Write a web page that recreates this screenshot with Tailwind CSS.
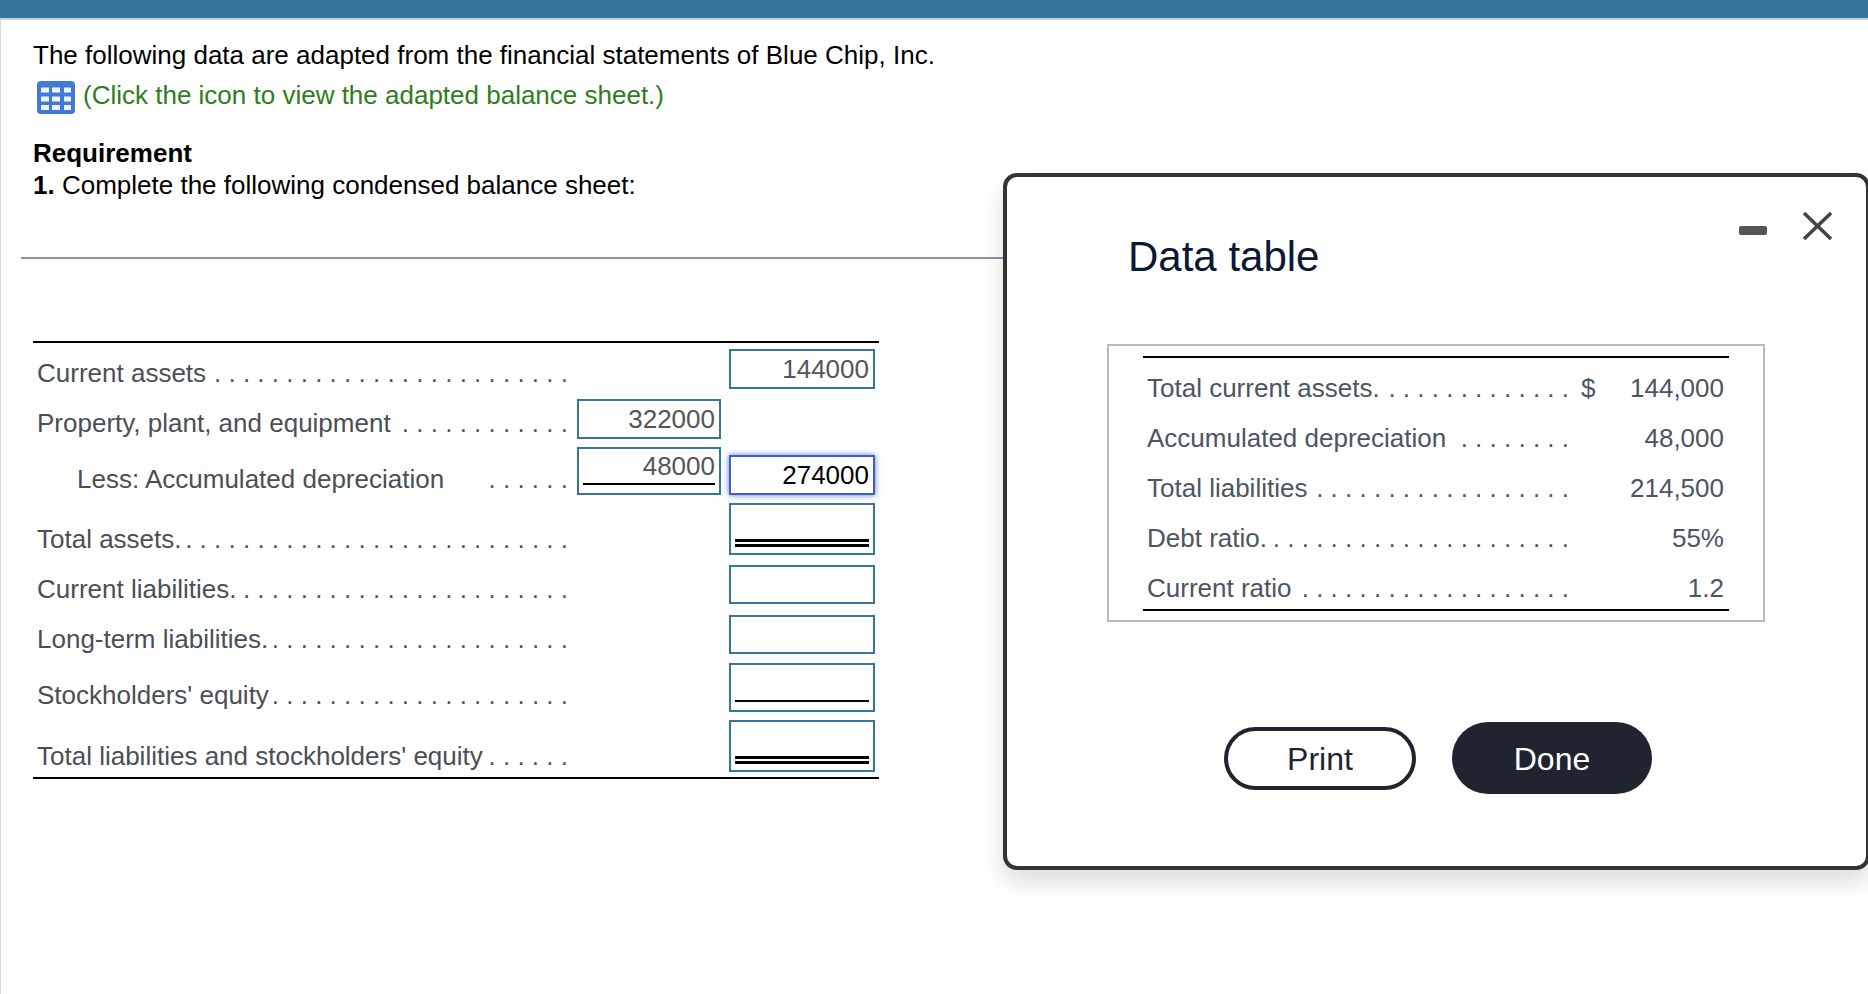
<!DOCTYPE html>
<html lang="en">
<head>
  <meta charset="UTF-8" />
  <title>Data table</title>
  <script src="https://cdn.jsdelivr.net/npm/@tailwindcss/browser@4"></script>
</head>
<body class="relative h-[994px] overflow-hidden bg-white font-['Liberation_Sans',Arial,sans-serif] text-[26px] text-black">
  <div class="h-[20px] bg-[#36769a] border-b-2 border-[#c9d0de]"></div>
  <div class="absolute left-0 top-[20px] bottom-0 w-px bg-[#d5d8ea]"></div>

  <div class="pt-[15px] pl-[33px]">
    <p class="leading-[40px]">The following data are adapted from the financial statements of Blue Chip, Inc.</p>
    <p class="flex items-center h-[40px] text-[#2e7d21]">
      <svg class="ml-[4px] mr-[8px] mt-[5px] blur-[0.5px]" width="38" height="33" viewBox="0 0 38 33">
        <rect width="38" height="33" rx="4" fill="#4379d6" />
        <g fill="#eef3fd">
          <rect x="4" y="6.5" width="8" height="5" /><rect x="15" y="6.5" width="8" height="5" /><rect x="27" y="6.5" width="7" height="5" />
          <rect x="4" y="15.5" width="8" height="5" /><rect x="15" y="15.5" width="8" height="5" /><rect x="27" y="15.5" width="7" height="5" />
          <rect x="4" y="24" width="8" height="5" /><rect x="15" y="24" width="8" height="5" /><rect x="27" y="24" width="7" height="5" />
        </g>
      </svg>
      (Click the icon to view the adapted balance sheet.)
    </p>
    <p class="mt-[22px] leading-[32px] font-bold">Requirement</p>
    <p class="leading-[32px]"><b>1.</b> Complete the following condensed balance sheet:</p>
  </div>

  <div class="mt-[56px] ml-[21px] h-[2px] w-[990px] bg-[#8a93a8]"></div>

  <!-- balance sheet -->
  <div class="mt-[82px] ml-[33px] w-[846px] border-y-2 border-black pb-[5px] text-[#4a4f55]">
    <div class="flex items-end h-[46px]">
      <div class="w-[535px] pl-[4px] pb-px leading-[30px] flex justify-between whitespace-nowrap"><span>Current assets</span><span class="text-[#555]">. . . . . . . . . . . . . . . . . . . . . . . . .</span></div>
      <div class="ml-[161px] w-[146px] h-[40px] border-2 border-[#36769a] pr-[4px] text-right leading-[36px] text-[#555]">144000</div>
    </div>
    <div class="flex items-end h-[50px]">
      <div class="w-[535px] pl-[4px] pb-px leading-[30px] flex justify-between whitespace-nowrap"><span>Property, plant, and equipment</span><span class="text-[#555]">. . . . . . . . . . . .</span></div>
      <div class="ml-[9px] w-[144px] h-[40px] border-2 border-[#36769a] pr-[4px] text-right leading-[36px] text-[#555]">322000</div>
    </div>
    <div class="flex items-end h-[56px]">
      <div class="w-[535px] pl-[44px] pb-px leading-[30px] flex justify-between whitespace-nowrap"><span>Less: Accumulated depreciation</span><span class="text-[#555]">. . . . . .</span></div>
      <div class="ml-[9px] w-[144px] h-[48px] border-2 border-[#36769a] px-[4px] pb-[8px] flex flex-col justify-end">
        <div class="text-right leading-[34px] text-[#555]">48000</div>
        <div class="h-[2px] bg-black"></div>
      </div>
      <div class="ml-[8px] w-[146px] h-[40px] border-2 border-[#3f5fc4] shadow-[0_0_6px_#5b78d8] pr-[4px] text-right leading-[36px] text-black">274000</div>
    </div>
    <div class="flex items-end h-[60px]">
      <div class="w-[535px] pl-[4px] pb-px leading-[30px] flex justify-between whitespace-nowrap"><span>Total assets.</span><span class="text-[#555]">. . . . . . . . . . . . . . . . . . . . . . . . . . .</span></div>
      <div class="ml-[161px] w-[146px] h-[52px] border-2 border-[#36769a] px-[4px] pb-[6px] flex flex-col justify-end">
        <div class="h-[8px] border-y-[3px] border-black"></div>
      </div>
    </div>
    <div class="flex items-end h-[49px]">
      <div class="w-[535px] pl-[4px] leading-[30px] flex justify-between whitespace-nowrap"><span>Current liabilities.</span><span class="text-[#555]">. . . . . . . . . . . . . . . . . . . . . . .</span></div>
      <div class="ml-[161px] w-[146px] h-[39px] border-2 border-[#36769a]"></div>
    </div>
    <div class="flex items-end h-[50px]">
      <div class="w-[535px] pl-[4px] leading-[30px] flex justify-between whitespace-nowrap"><span>Long-term liabilities.</span><span class="text-[#555]">. . . . . . . . . . . . . . . . . . . . .</span></div>
      <div class="ml-[161px] w-[146px] h-[39px] border-2 border-[#36769a]"></div>
    </div>
    <div class="flex items-end h-[58px]">
      <div class="w-[535px] pl-[4px] pb-[2px] leading-[30px] flex justify-between whitespace-nowrap"><span>Stockholders' equity</span><span class="text-[#555]">. . . . . . . . . . . . . . . . . . . . .</span></div>
      <div class="ml-[161px] w-[146px] h-[49px] border-2 border-[#36769a] px-[4px] pb-[8px] flex flex-col justify-end">
        <div class="h-[2px] bg-black"></div>
      </div>
    </div>
    <div class="flex items-end h-[60px]">
      <div class="w-[535px] pl-[4px] pb-px leading-[30px] flex justify-between whitespace-nowrap"><span>Total liabilities and stockholders' equity</span><span class="text-[#555]">. . . . . .</span></div>
      <div class="ml-[161px] w-[146px] h-[52px] border-2 border-[#36769a] px-[4px] pb-[6px] flex flex-col justify-end">
        <div class="h-[8px] border-y-[3px] border-black"></div>
      </div>
    </div>
  </div>

  <!-- data table popup -->
  <div class="absolute left-[1003px] top-[173px] w-[867px] h-[697px] rounded-[14px] border-4 border-[#333] bg-white shadow-[0_12px_24px_rgba(0,0,0,0.14)]">
    <div class="absolute left-[732px] top-[49px] h-[9px] w-[28px] rounded-[2px] bg-[#555]"></div>
    <svg class="absolute left-[796px] top-[35px]" width="29" height="28" viewBox="0 0 29 28" fill="none" stroke="#444" stroke-width="3.5">
      <path d="M1 1 L28 27 M28 1 L1 27" />
    </svg>

    <h2 class="pt-[55px] pl-[121px] text-[42px] leading-[50px] font-normal text-[#0b1733]">Data table</h2>

    <div class="mt-[62px] ml-[100px] w-[658px] h-[278px] border-2 border-[#bbb] pt-[10px] text-[#4b5563]">
      <div class="ml-[34px] w-[586px] border-y-2 border-black pt-[9px] flex flex-col gap-[8px] [&>div]:h-[42px]">
        <div class="flex leading-[42px] whitespace-nowrap">
          <div class="w-[426px] pl-[4px] flex justify-between"><span>Total current assets.</span><span>. . . . . . . . . . . . .</span></div>
          <div class="ml-[12px] w-[144px] pr-px flex justify-between"><span>$</span><span>144,000</span></div>
        </div>
        <div class="flex leading-[42px] whitespace-nowrap">
          <div class="w-[426px] pl-[4px] flex justify-between"><span>Accumulated depreciation</span><span>. . . . . . . .</span></div>
          <div class="ml-[12px] w-[144px] pr-px text-right">48,000</div>
        </div>
        <div class="flex leading-[42px] whitespace-nowrap">
          <div class="w-[426px] pl-[4px] flex justify-between"><span>Total liabilities</span><span>. . . . . . . . . . . . . . . . . .</span></div>
          <div class="ml-[12px] w-[144px] pr-px text-right">214,500</div>
        </div>
        <div class="flex leading-[42px] whitespace-nowrap">
          <div class="w-[426px] pl-[4px] flex justify-between"><span>Debt ratio.</span><span>. . . . . . . . . . . . . . . . . . . . .</span></div>
          <div class="ml-[12px] w-[144px] pr-px text-right">55%</div>
        </div>
        <div class="flex leading-[42px] whitespace-nowrap">
          <div class="w-[426px] pl-[4px] flex justify-between"><span>Current ratio</span><span>. . . . . . . . . . . . . . . . . . .</span></div>
          <div class="ml-[12px] w-[144px] pr-px text-right">1.2</div>
        </div>
      </div>
    </div>

    <div class="mt-[100px] ml-[217px] flex items-center gap-[36px] text-[32px]">
      <button class="w-[192px] h-[63px] rounded-[32px] border-4 border-[#1f2430] pt-px text-[#1f2430]">Print</button>
      <button class="w-[200px] h-[72px] rounded-[36px] bg-[#1f2430] pt-px text-white">Done</button>
    </div>
  </div>
</body>
</html>
